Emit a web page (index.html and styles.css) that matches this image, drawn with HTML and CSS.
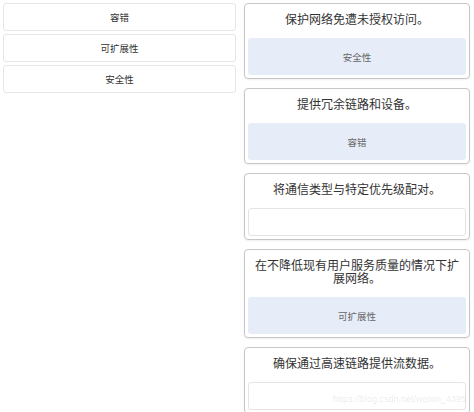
FILE: index.html
```html
<!DOCTYPE html>
<html lang="zh-CN">
<head>
  <meta charset="UTF-8">
  <meta name="viewport" content="width=device-width,initial-scale=1.0">
  <title>拖放匹配</title>
  <link rel="stylesheet" href="styles.css">
</head>
<body>
  <main class="board">
    <div class="options">
      <div class="option">容错</div>
      <div class="option">可扩展性</div>
      <div class="option">安全性</div>
    </div>
    <div class="targets">
      <div class="card">
        <div class="title">保护网络免遭未授权访问。</div>
        <div class="zone filled">安全性</div>
      </div>
      <div class="card">
        <div class="title">提供冗余链路和设备。</div>
        <div class="zone filled">容错</div>
      </div>
      <div class="card">
        <div class="title">将通信类型与特定优先级配对。</div>
        <div class="zone empty"></div>
      </div>
      <div class="card">
        <div class="title">在不降低现有用户服务质量的情况下扩展网络。</div>
        <div class="zone filled">可扩展性</div>
      </div>
      <div class="card">
        <div class="title">确保通过高速链路提供流数据。</div>
        <div class="zone empty"></div>
      </div>
    </div>
  </main>
  <div class="watermark">https://blog.csdn.net/weixin_4395</div>
</body>
</html>
```

FILE: styles.css
```css
html, body {
  margin: 0;
  padding: 0;
  background: #fff;
  font-family: "Noto Sans CJK SC", "Noto Sans", sans-serif;
  color: #333;
}
.board {
  display: flex;
  gap: 8px;
  padding: 3px 4px 0 3px;
  align-items: flex-start;
}
.options {
  width: 233px;
  display: flex;
  flex-direction: column;
  gap: 3px;
}
.option {
  height: 26px;
  border: 1px solid #e6e6e6;
  border-radius: 3px;
  display: flex;
  align-items: center;
  justify-content: center;
  font-size: 9.5px;
  color: #333;
}
.targets {
  flex: 1;
  display: flex;
  flex-direction: column;
  gap: 9px;
}
.card {
  border: 1px solid #c6c6c6;
  border-radius: 4px;
  padding: 0 3px 3px 3px;
  box-shadow: 0 1px 2px #0001;
}
.title {
  padding: 8px 7px 13px 7px;
  font-size: 12px;
  line-height: 13px;
  text-align: center;
  color: #333;
}
.zone {
  border-radius: 3px;
  display: flex;
  align-items: center;
  justify-content: center;
  font-size: 9.5px;
  color: #666;
}
.zone.filled {
  height: 37px;
  background: #e6edf8;
}
.zone.empty {
  height: 26px;
  border: 1px solid #e4e4e4;
  background: #fff;
}
.watermark {
  position: absolute;
  right: 8px;
  top: 394px;
  white-space: nowrap;
  font-family: "Liberation Sans", sans-serif;
  font-size: 9px;
  color: #0000001a;
}
```
